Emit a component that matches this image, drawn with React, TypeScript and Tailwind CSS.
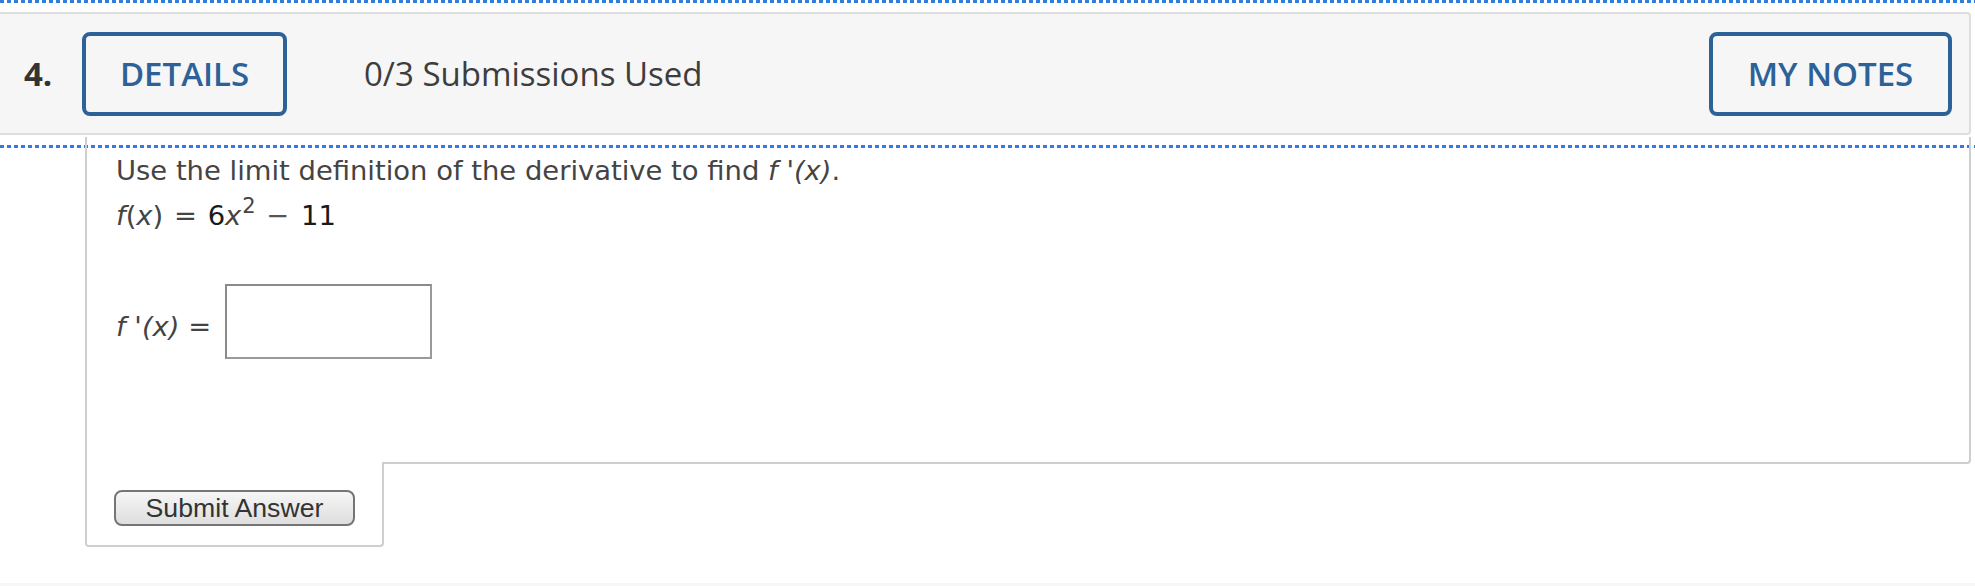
import React from "react";

const dotted =
  "h-[3px] w-full bg-[repeating-linear-gradient(90deg,#2f7de1_0px,#2f7de1_4px,transparent_4px,transparent_7px)]";

function OutlineButton({ label, width }: { label: string; width: string }) {
  return (
    <button
      type="button"
      className={`${width} h-[84px] rounded-[8px] border-[4px] border-[#2c6297] bg-transparent text-[33px] font-semibold text-[#2c6297] font-['Open_Sans',sans-serif] flex items-center justify-center`}
    >
      {label}
    </button>
  );
}

export default function App() {
  return (
    <div className="w-[1975px] h-[586px] bg-white overflow-hidden">
      <div className={dotted} />

      {/* question header */}
      <div className="mt-[9px] mr-[4px] h-[123px] bg-[#f6f6f6] border-y-2 border-r-2 border-[#dedede] rounded-r-[4px] flex items-center pl-[24px] pr-[17px] font-['Open_Sans',sans-serif]">
        <span className="text-[33px] font-bold text-[#333] w-[27px]">4.</span>
        <div className="ml-[31px]">
          <OutlineButton label="DETAILS" width="w-[205px]" />
        </div>
        <span className="ml-[77px] text-[33px] text-[#3d3d3d]">0/3 Submissions Used</span>
        <div className="ml-auto">
          <OutlineButton label="MY NOTES" width="w-[243px]" />
        </div>
      </div>

      <div className={`mt-[10px] ${dotted}`} />

      {/* question body */}
      <div className="-mt-[11px] ml-[85px] mr-[4px]">
        <div className="h-[327px] border-x-2 border-b-2 border-[#cfcfcf] rounded-br-[4px] pl-[29px] pt-[16px] font-['DejaVu_Sans',Verdana,sans-serif] text-[27.4px] text-[#444]">
          <p className="leading-[36px]">
            Use the limit definition of the derivative to find <i>f</i> '<i>(x)</i>.
          </p>
          <p className="mt-[9px] leading-[36px] whitespace-pre">
            <i>f</i>(<i>x</i>)<span className="ml-[2px]"> = </span>
            <span className="ml-[2px] text-[#1a1a1a]">6</span>
            <i>x</i>
            <sup className="text-[21px] -top-[12px] ml-[1px]">2</sup>
            <span className="ml-[2px] text-[#555]"> − </span>
            <span className="ml-[3px] text-[#1a1a1a]">11</span>
          </p>
          <div className="mt-[50px] flex items-start">
            <span className="mt-[25px] leading-[36px] whitespace-pre">
              <i>f</i> '<i>(x)</i> =
            </span>
            <input
              type="text"
              className="ml-[14px] w-[207px] h-[75px] border-2 border-[#9a9a9a] border-t-[#8a8a8a] border-l-[#8a8a8a] bg-white outline-none"
            />
          </div>
        </div>

        {/* submit tab */}
        <div className="-mt-[2px] w-[299px] bg-white border-x-2 border-b-2 border-[#cfcfcf] rounded-b-[4px] pt-[28px] pb-[19px] pl-[27px]">
          <button
            type="button"
            className="w-[241px] h-[36px] rounded-[8px] border-2 border-[#757575] bg-[linear-gradient(#f6f6f6,#dedede)] text-[26.67px] leading-none text-[#333] font-['Liberation_Sans',Arial,sans-serif] flex items-center justify-center"
          >
            Submit Answer
          </button>
        </div>
      </div>

      <div className="mt-[36px] h-[3px] bg-[#f7f7f7]" />
    </div>
  );
}
